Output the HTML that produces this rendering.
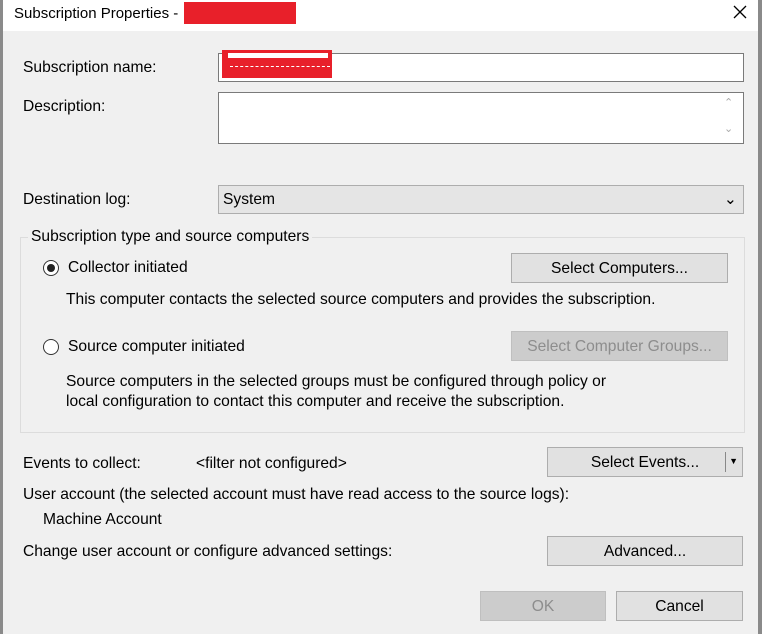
<!DOCTYPE html>
<html><head><style>
*{margin:0;padding:0;box-sizing:border-box}
body{width:762px;height:634px;background:#f0f0f0;font-family:"Liberation Sans",sans-serif;font-size:15.6px;color:#000;position:relative;overflow:hidden}
.a{position:absolute;white-space:nowrap}
.btn{position:absolute;background:#e1e1e1;border:1px solid #adadad;text-align:center;line-height:29px;font-size:15.6px}
.box{position:absolute;background:#fff;border:1px solid #7a7a7a}
.radio{position:absolute;width:16px;height:16px;border:1px solid #333;border-radius:50%;background:#fff}
</style></head><body>
<div class="a" style="left:0;top:0;width:762px;height:31px;background:#fff"></div>
<div class="a" style="left:0;top:0;width:3px;height:634px;background:#8a8a8a"></div>
<div class="a" style="left:758px;top:0;width:4px;height:634px;background:#8a8a8a"></div>
<div class="a" style="left:14px;top:5px;font-size:15px">Subscription Properties -</div>
<div class="a" style="left:184px;top:2px;width:112px;height:22px;background:#e8202a"></div>
<svg class="a" style="left:733px;top:5px" width="14" height="14"><path d="M1 1L13 13M13 1L1 13" stroke="#000" stroke-width="1.3"/></svg>

<div class="a" style="left:23px;top:59px">Subscription name:</div>
<div class="box" style="left:218px;top:53px;width:526px;height:29px"></div>
<div class="a" style="left:222px;top:50px;width:110px;height:28px;background:#e8202a"></div>
<div class="a" style="left:228px;top:53px;width:100px;height:5px;background:#fff"></div>
<div class="a" style="left:230px;top:66px;width:100px;border-top:1px dashed #fff"></div>
<div class="a" style="left:23px;top:98px">Description:</div>
<div class="box" style="left:218px;top:92px;width:526px;height:52px"></div>
<div class="a" style="left:724px;top:96px;color:#aaa;font-size:11px">⌃</div>
<div class="a" style="left:724px;top:122px;color:#aaa;font-size:11px">⌄</div>

<div class="a" style="left:23px;top:191px">Destination log:</div>
<div class="btn" style="left:218px;top:185px;width:526px;height:29px;background:#e5e5e5;text-align:left;padding-left:4px;line-height:28px">System<span style="position:absolute;right:6px;top:0">⌄</span></div>

<div class="a" style="left:20px;top:237px;width:725px;height:196px;border:1px solid #dcdcdc"></div>
<div class="a" style="left:28px;top:228px;background:#f0f0f0;padding:0 3px">Subscription type and source computers</div>
<div class="radio" style="left:43px;top:260px"><div style="position:absolute;left:3px;top:3px;width:8px;height:8px;border-radius:50%;background:#222"></div></div>
<div class="a" style="left:68px;top:259px">Collector initiated</div>
<div class="btn" style="left:511px;top:253px;width:217px;height:30px">Select Computers...</div>
<div class="a" style="left:66px;top:291px">This computer contacts the selected source computers and provides the subscription.</div>
<div class="radio" style="left:43px;top:339px"></div>
<div class="a" style="left:68px;top:338px">Source computer initiated</div>
<div class="btn" style="left:511px;top:331px;width:217px;height:30px;background:#ccc;border-color:#bfbfbf;color:#8d8d8d">Select Computer Groups...</div>
<div class="a" style="left:66px;top:373px">Source computers in the selected groups must be configured through policy or</div>
<div class="a" style="left:66px;top:393px">local configuration to contact this computer and receive the subscription.</div>

<div class="a" style="left:23px;top:455px">Events to collect:</div>
<div class="a" style="left:196px;top:455px">&lt;filter not configured&gt;</div>
<div class="btn" style="left:547px;top:447px;width:196px;height:30px">Select Events...<span style="position:absolute;left:177px;top:4px;height:20px;border-left:1px solid #888"></span><span style="position:absolute;right:4px;top:-1px;font-size:9px">▼</span></div>
<div class="a" style="left:23px;top:486px">User account (the selected account must have read access to the source logs):</div>
<div class="a" style="left:43px;top:511px">Machine Account</div>
<div class="a" style="left:23px;top:543px">Change user account or configure advanced settings:</div>
<div class="btn" style="left:547px;top:536px;width:196px;height:30px">Advanced...</div>
<div class="btn" style="left:480px;top:591px;width:126px;height:30px;background:#ccc;border-color:#bfbfbf;color:#8d8d8d">OK</div>
<div class="btn" style="left:616px;top:591px;width:127px;height:30px">Cancel</div>
</body></html>
